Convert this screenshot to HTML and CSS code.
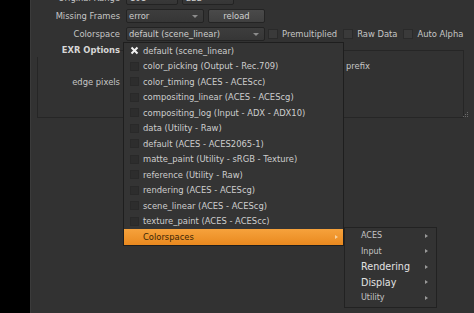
FILE: index.html
```html
<!DOCTYPE html>
<html lang="en">
<head>
    <meta charset="UTF-8">
    <title>Read node - Colorspace</title>
    <link rel="stylesheet" href="styles.css">
</head>
<body>
    <div class="app">
        <div class="gutter"></div>
        <div class="panel">
            <div class="row row-top">
                <span class="label">Original Range</span>
                <span class="field num">101</span>
                <span class="field num">222</span>
            </div>
            <div class="row">
                <span class="label">Missing Frames</span>
                <span class="field select w-error">error<i class="caret"></i></span>
                <span class="button">reload</span>
            </div>
            <div class="row row-cs">
                <span class="label">Colorspace</span>
                <span class="field select w-cs">default (scene_linear)<i class="caret"></i></span>
                <span class="check"><i class="box"></i>Premultiplied</span>
                <span class="check"><i class="box"></i>Raw Data</span>
                <span class="check"><i class="box"></i>Auto Alpha</span>
            </div>
            <div class="row row-head">
                <span class="label bold">EXR Options</span>
            </div>
            <div class="group">
                <div class="row">
                    <span class="label"></span>
                    <span class="prefix">prefix</span>
                </div>
                <div class="row">
                    <span class="label">edge pixels</span>
                </div>
                <svg class="grip" width="6" height="6" viewBox="0 0 6 6">
                    <rect x="4" y="0" width="1" height="1" fill="#6a6a6a"/>
                    <rect x="2" y="2" width="1" height="1" fill="#6a6a6a"/>
                    <rect x="4" y="2" width="1" height="1" fill="#6a6a6a"/>
                    <rect x="0" y="4" width="1" height="1" fill="#6a6a6a"/>
                    <rect x="2" y="4" width="1" height="1" fill="#6a6a6a"/>
                    <rect x="4" y="4" width="1" height="1" fill="#6a6a6a"/>
                </svg>
            </div>

            <!-- colorspace dropdown, open -->
            <div class="menu">
                <div class="item">
                    <i class="box checked">
                        <svg width="9" height="9" viewBox="0 0 9 9">
                            <path d="M1.5 1.5 L7.5 7.5 M7.5 1.5 L1.5 7.5" stroke="#f0f0f0" stroke-width="2"/>
                        </svg>
                    </i>default (scene_linear)
                </div>
                <div class="item"><i class="box"></i>color_picking (Output - Rec.709)</div>
                <div class="item"><i class="box"></i>color_timing (ACES - ACEScc)</div>
                <div class="item"><i class="box"></i>compositing_linear (ACES - ACEScg)</div>
                <div class="item"><i class="box"></i>compositing_log (Input - ADX - ADX10)</div>
                <div class="item"><i class="box"></i>data (Utility - Raw)</div>
                <div class="item"><i class="box"></i>default (ACES - ACES2065-1)</div>
                <div class="item"><i class="box"></i>matte_paint (Utility - sRGB - Texture)</div>
                <div class="item"><i class="box"></i>reference (Utility - Raw)</div>
                <div class="item"><i class="box"></i>rendering (ACES - ACEScg)</div>
                <div class="item"><i class="box"></i>scene_linear (ACES - ACEScg)</div>
                <div class="item"><i class="box"></i>texture_paint (ACES - ACEScc)</div>
                <div class="item active"><span class="spacer"></span>Colorspaces<i class="arrow"></i></div>
            </div>

            <div class="submenu">
                <div class="sub-item">ACES<i class="arrow"></i></div>
                <div class="sub-item">Input<i class="arrow"></i></div>
                <div class="sub-item big">Rendering<i class="arrow"></i></div>
                <div class="sub-item big">Display<i class="arrow"></i></div>
                <div class="sub-item">Utility<i class="arrow"></i></div>
            </div>
        </div>
    </div>
</body>
</html>
```

FILE: styles.css
```css
body {
    margin: 0;
    background: #000;
    font-family: "DejaVu Sans", sans-serif;
    font-size: 8.4px;
    color: #c6c6c6;
    overflow: hidden;
}
.app {
    display: flex;
    height: 313px;
}
.gutter {
    width: 30px;
    flex: none;
    background: #000;
}
.panel {
    flex: 1;
    position: relative;
    background: #323232;
    border-left: 1px solid #3b3b3b;
}
.row {
    display: flex;
    align-items: center;
    gap: 4px;
    height: 14px;
    margin-bottom: 4px;
}
.row-top {
    margin-top: -9px;
}
.row-cs {
    margin-bottom: 2px;
}
.label {
    width: 89px;
    flex: none;
    margin-right: 2px;
    text-align: right;
    white-space: nowrap;
}
.bold {
    font-weight: bold;
    color: #d6d6d6;
}
.row-head {
    position: relative;
    z-index: 1;
    margin-bottom: -7px;
}
.row-head .label {
    background: #323232;
    line-height: 14px;
}

/* inputs */
.field {
    box-sizing: border-box;
    height: 14px;
    display: flex;
    align-items: center;
    padding: 0 3px;
    border: 1px solid #232323;
    border-radius: 2px;
    background: linear-gradient(#3d3d3d, #363636);
    color: #cdcdcd;
    white-space: nowrap;
}
.num {
    width: 52px;
}
.select {
    justify-content: space-between;
    padding: 0 5px 0 2px;
}
.w-error {
    width: 78px;
}
.w-cs {
    width: 139px;
}
.caret {
    width: 0;
    height: 0;
    border-left: 3px solid transparent;
    border-right: 3px solid transparent;
    border-top: 3px solid #8c8c8c;
}
.button {
    box-sizing: border-box;
    width: 57px;
    height: 14px;
    line-height: 12px;
    text-align: center;
    border: 1px solid #242424;
    border-radius: 2px;
    background: linear-gradient(#4a4a4a, #404040);
    color: #d0d0d0;
}
.check {
    display: flex;
    align-items: center;
    gap: 4px;
    margin-left: 2px;
    white-space: nowrap;
}
.row-cs .check:nth-child(3) {
    margin-left: -1px;
}
.box {
    display: block;
    box-sizing: border-box;
    width: 10px;
    height: 10px;
    border: 1px solid #2a2a2a;
    background: #3a3a3a;
    flex: none;
}

/* EXR group */
.group {
    position: relative;
    box-sizing: border-box;
    height: 68px;
    margin: 0 10px 0 6px;
    padding-top: 8px;
    border: 1px solid #262626;
}
.group .row {
    margin-bottom: 2px;
}
.group .label {
    width: 82px;
}
.prefix {
    margin-left: 220px;
}
.grip {
    position: absolute;
    right: -6px;
    bottom: -1px;
}

/* dropdown menu */
.menu {
    position: absolute;
    left: 92px;
    top: 42px;
    width: 221px;
    box-sizing: border-box;
    border: 1px solid #1e1e1e;
    background: #343434;
    color: #cecece;
}
.item {
    display: flex;
    align-items: center;
    gap: 4px;
    height: 15.5px;
    padding-left: 6px;
    white-space: nowrap;
}
.item .box {
    width: 9px;
    height: 9px;
    background: #2d2d2d;
    border-color: #292929;
}
.item .checked {
    background: none;
    border: none;
}
.item .checked svg {
    display: block;
}
.item.active {
    background: linear-gradient(#f6a23c, #e9891f);
    color: #3a2507;
    padding-right: 5px;
}
.spacer {
    width: 9px;
    flex: none;
}
.item .arrow {
    margin-left: auto;
    border-left-color: #f8cf9a;
}
.arrow {
    width: 0;
    height: 0;
    border-top: 2.5px solid transparent;
    border-bottom: 2.5px solid transparent;
    border-left: 3px solid #9a9a9a;
}

.submenu {
    position: absolute;
    left: 313px;
    top: 227px;
    width: 93px;
    box-sizing: border-box;
    padding-bottom: 1px;
    border: 1px solid #222;
    background: #333;
    color: #c4c4c4;
    font-size: 8px;
}
.sub-item {
    display: flex;
    align-items: center;
    justify-content: space-between;
    height: 15.5px;
    padding: 0 8px 0 16px;
}
.sub-item.big {
    font-size: 9.6px;
    color: #e2e2e2;
}
```
